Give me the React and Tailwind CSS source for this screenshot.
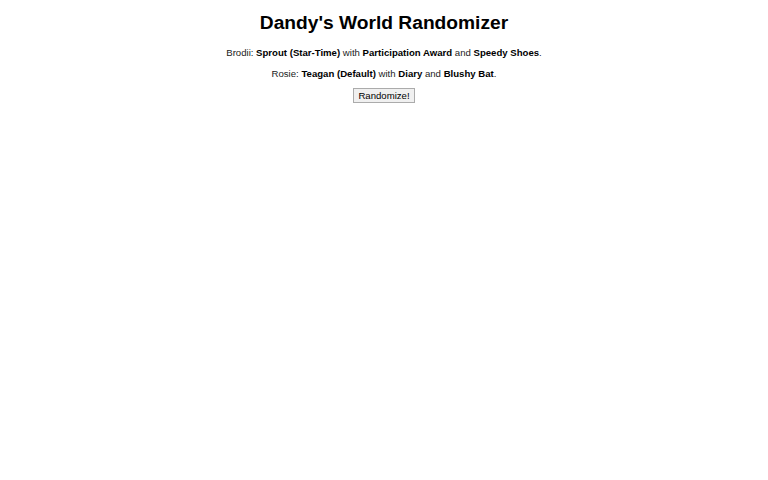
import { useState } from 'react';

const toons = [
  'Sprout (Star-Time)',
  'Teagan (Default)',
  'Boxten',
  'Poppy',
  'Astro',
  'Shelly',
  'Vee',
  'Pebble',
  'Goob',
  'Scraps',
];

const trinkets = [
  'Participation Award',
  'Speedy Shoes',
  'Diary',
  'Blushy Bat',
  'Pink Bow',
  'Magnifying Glass',
  'Ribbon Spool',
  'Coin Purse',
];

const pick = (list, not) => {
  const pool = list.filter((x) => x !== not);
  return pool[Math.floor(Math.random() * pool.length)];
};

function Row({ name, roll }) {
  return (
    <p className="my-[9.6px] leading-[11px]">
      {name}: <b className="text-black">{roll.toon}</b> with <b className="text-black">{roll.a}</b> and{' '}
      <b className="text-black">{roll.b}</b>.
    </p>
  );
}

export default function App() {
  const [rolls, setRolls] = useState({
    Brodii: { toon: 'Sprout (Star-Time)', a: 'Participation Award', b: 'Speedy Shoes' },
    Rosie: { toon: 'Teagan (Default)', a: 'Diary', b: 'Blushy Bat' },
  });

  const randomize = () => {
    const next = {};
    for (const name of Object.keys(rolls)) {
      const a = pick(trinkets);
      next[name] = { toon: pick(toons), a, b: pick(trinkets, a) };
    }
    setRolls(next);
  };

  return (
    <div className="min-h-[480px] bg-white pt-[1px] text-center text-[9.6px] text-[#222] font-['Liberation_Sans',Arial,sans-serif]">
      <h1 className="mt-[11px] mb-[13px] text-[19.2px] leading-[22px] font-bold text-black">Dandy's World Randomizer</h1>
      {Object.entries(rolls).map(([name, roll]) => (
        <Row key={name} name={name} roll={roll} />
      ))}
      <button
        onClick={randomize}
        className="border border-[#ababab] bg-[#f0f0f0] px-[4px] py-[1px] text-[9.6px] leading-[11px] text-black"
      >
        Randomize!
      </button>
    </div>
  );
}
